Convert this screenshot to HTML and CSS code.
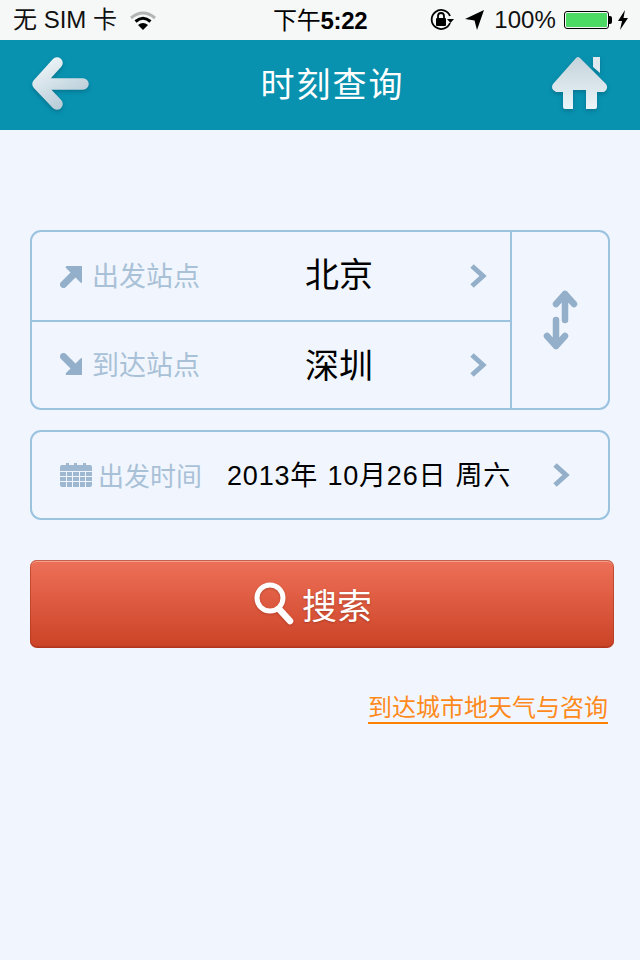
FILE: index.html
```html
<!DOCTYPE html>
<html lang="zh-CN">
<head>
<meta charset="utf-8">
<title>时刻查询</title>
<link rel="stylesheet" href="styles.css">
</head>
<body>
<svg class="defs" width="0" height="0" aria-hidden="true">
  <defs>
    <linearGradient id="icon-grad" x1="0" y1="0" x2="0" y2="1">
      <stop offset="0" stop-color="#c4d3da"/>
      <stop offset="1" stop-color="#ecf5f9"/>
    </linearGradient>
    <linearGradient id="back-grad" x1="0" y1="0" x2="0.600" y2="1">
      <stop offset="0" stop-color="#eef5f8"/>
      <stop offset="1" stop-color="#b9cdd8"/>
    </linearGradient>
  </defs>
</svg>
<header class="status">
  <div class="status-left">
    <span class="carrier">无 SIM 卡</span>
    <svg class="wifi" width="28" height="20" viewBox="0 0 28 20">
      <path d="M2 8 Q14 -2 26 8" fill="none" stroke="#b4b4b4" stroke-width="3"/>
      <path d="M6.500 11.500 Q14 5 21.500 11.500" fill="none" stroke="#000" stroke-width="3"/>
      <path d="M9 15 L14 20 L19 15 Q14 11 9 15Z" fill="#000"/>
    </svg>
  </div>
  <div class="clock"><span class="clock-cjk">下午</span>5:22</div>
  <div class="status-right">
    <svg class="lock" width="24" height="24" viewBox="0 0 24 24">
      <path d="M20 15 A9.500 9.500 0 1 1 20 8" fill="none" stroke="#000" stroke-width="1.800"/>
      <path d="M17 11 H24 L20.500 15Z" fill="#000"/>
      <rect x="6" y="10" width="10" height="8" rx="1" fill="#000"/>
      <path d="M8 10 V8 A3 3 0 0 1 14 8 V10" fill="none" stroke="#000" stroke-width="1.800"/>
    </svg>
    <svg class="loc" width="20" height="20" viewBox="0 0 20 20">
      <path d="M19 0 L0 9 L9.500 10.500 L12 20Z" fill="#000"/>
    </svg>
    <span class="battery-pct">100%</span>
    <span class="battery"><span class="battery-fill"></span></span>
    <span class="battery-tip"></span>
    <svg class="bolt" width="10" height="20" viewBox="0 0 10 20">
      <path d="M7 0 L0 11 H4 L2 20 L10 8 H5.500Z" fill="#000"/>
    </svg>
  </div>
</header>
<nav class="nav">
  <svg class="nav-icon" width="62" height="58" viewBox="0 0 62 58">
    <path d="M27 7 L8 28 L27 48 M9 28 H53" fill="none" stroke="url(#back-grad)" stroke-width="11.500" stroke-linecap="round" stroke-linejoin="round"/>
  </svg>
  <h1 class="title">时刻查询</h1>
  <svg class="nav-icon" width="60" height="58" viewBox="0 0 60 58">
    <path d="M42 1 H49 V17 L42 11Z" fill="#dfe9ee"/>
    <path d="M25 2 Q27 0 29 2 L55 28 Q58 33 53 36 H46 V51 Q46 53 44 53 H35 V34 H22 V53 H14 Q12 53 12 51 V36 H5 Q-1 33 2 28Z" fill="url(#icon-grad)"/>
  </svg>
</nav>
<main class="form">
  <section class="route box">
    <div class="route-rows">
      <div class="row row-top">
        <svg class="dir" width="24" height="24" viewBox="0 0 24 24"><path d="M3.500 20.500 L15 9" fill="none" stroke="#93afc9" stroke-width="7" stroke-linecap="round"/><path d="M7 2 H22 V18 Q22 20 20 18 L6 4 Q5 2 7 2Z" fill="#93afc9"/></svg>
        <span class="label">出发站点</span>
        <span class="station">北京</span>
        <svg class="chev" width="18" height="26" viewBox="0 0 18 26"><path d="M3 3 L14 13 L3 23" fill="none" stroke="#93afc9" stroke-width="5"/></svg>
      </div>
      <div class="row row-bottom">
        <svg class="dir" width="24" height="24" viewBox="0 0 24 24"><path d="M3.500 3.500 L15 15" fill="none" stroke="#93afc9" stroke-width="7" stroke-linecap="round"/><path d="M7 22 H22 V6 Q22 4 20 6 L6 20 Q5 22 7 22Z" fill="#93afc9"/></svg>
        <span class="label">到达站点</span>
        <span class="station">深圳</span>
        <svg class="chev" width="18" height="26" viewBox="0 0 18 26"><path d="M3 3 L14 13 L3 23" fill="none" stroke="#93afc9" stroke-width="5"/></svg>
      </div>
    </div>
    <div class="swap">
      <svg width="36" height="60" viewBox="0 0 36 60">
        <path d="M23 30 V4 M14 14 L23 4 L32 14" fill="none" stroke="#93afc9" stroke-width="6.500" stroke-linecap="round" stroke-linejoin="round"/>
        <path d="M14 30 V56 M5 46 L14 56 L23 46" fill="none" stroke="#93afc9" stroke-width="6.500" stroke-linecap="round" stroke-linejoin="round"/>
      </svg>
    </div>
  </section>
  <section class="date box">
    <svg class="cal" width="32" height="26" viewBox="0 0 32 26">
      <path d="M2 3 H6 V1 H9 V3 H14 V1 H17 V3 H23 V1 H26 V3 H30 Q32 3 32 5 V9 H0 V5 Q0 3 2 3Z M0 10 H6 V14 H0Z M7 10 H12 V14 H7Z M13 10 H19 V14 H13Z M20 10 H25 V14 H20Z M26 10 H32 V14 H26Z M0 15 H6 V19 H0Z M7 15 H12 V19 H7Z M13 15 H19 V19 H13Z M20 15 H25 V19 H20Z M26 15 H32 V19 H26Z M0 20 H6 V25 H2 Q0 25 0 23Z M7 20 H12 V25 H7Z M13 20 H19 V25 H13Z M20 20 H25 V25 H20Z M26 20 H32 V23 Q32 25 30 25 H26Z" fill="#9db8d0"/>
    </svg>
    <span class="label label-date">出发时间</span>
    <span class="date-value">2013年 10月26日 周六</span>
    <svg class="chev" width="18" height="26" viewBox="0 0 18 26"><path d="M3 3 L14 13 L3 23" fill="none" stroke="#93afc9" stroke-width="5"/></svg>
  </section>
  <button class="search" type="button">
    <svg class="search-icon" width="40" height="44" viewBox="0 0 40 44">
      <circle cx="16" cy="16" r="13" fill="none" stroke="#fff" stroke-width="5"/>
      <path d="M25 27 L36 39" fill="none" stroke="#fff" stroke-width="6.500" stroke-linecap="round"/>
    </svg>
    <span>搜索</span>
  </button>
  <p class="more"><a class="more-link" href="#">到达城市地天气与咨询</a></p>
</main>
</body>
</html>
```
FILE: styles.css
```css
* { box-sizing: border-box; }
html, body { margin: 0; padding: 0; }
body {
  width: 640px;
  height: 960px;
  overflow: hidden;
  background: #f1f6fe;
  font-family: "Liberation Sans", "Noto Sans CJK SC", sans-serif;
}
.defs { display: block; height: 0; }

.status {
  height: 40px;
  background: #f6f8f8;
  display: flex;
  align-items: center;
  padding: 0 12px 0 13px;
  position: relative;
  color: #000;
}
.status-left { display: flex; align-items: center; gap: 12px; flex: 1; }
.carrier { font-size: 24px; line-height: 40px; color: #111; }
.wifi { margin-top: -1px; }
.clock {
  position: absolute;
  left: 273px;
  top: 0;
  line-height: 42px;
  font-size: 24px;
  font-weight: 700;
  letter-spacing: -.3px;
}
.clock-cjk { font-weight: 400; }
.status-right { display: flex; align-items: center; }
.lock { margin-right: 11px; }
.loc { margin-right: 9px; }
.battery-pct { font-size: 24px; letter-spacing: .1px; margin-right: 8px; color: #111; }
.battery {
  width: 45px;
  height: 18px;
  border: 1.500px solid #000;
  border-radius: 3px;
  padding: 1px;
  display: block;
}
.battery-fill { display: block; height: 100%; background: #4cd964; border-radius: 1px; }
.battery-tip { width: 3px; height: 8px; background: #000; border-radius: 0 2px 2px 0; margin-right: 6px; }

.nav {
  height: 90px;
  background: #0892b0;
  display: flex;
  align-items: center;
  justify-content: space-between;
  padding: 0 29px 0 30px;
}
.nav-icon { filter: drop-shadow(0 2px 2px rgba(0, 60, 80, .35)); }
.title {
  margin: 0;
  font-size: 34px;
  font-weight: 400;
  letter-spacing: 2px;
  color: #fff;
  line-height: 90px;
  padding-left: 22px;
}

.form { padding: 100px 26px 0 30px; }
.box {
  width: 580px;
  border: 2px solid #9bc3e0;
  border-radius: 11px;
}
.route { height: 180px; display: flex; }
.route-rows { width: 478px; display: flex; flex-direction: column; }
.row { display: flex; align-items: center; padding: 0 23px 0 28px; }
.row-top { height: 90px; border-bottom: 2px solid #9bc3e0; }
.row-bottom { flex: 1; }
.dir { flex: none; }
.label { font-size: 27px; color: #a9c1d7; margin: 0 0 4px 8px; white-space: nowrap; }
.station { font-size: 34px; color: #000; margin: 0 0 4px 105px; flex: 1; }
.row-top .station { margin-bottom: 8px; }
.chev { flex: none; }
.swap {
  flex: 1;
  border-left: 2px solid #9bc3e0;
  display: flex;
  align-items: center;
  justify-content: center;
}
.date {
  height: 90px;
  margin-top: 20px;
  display: flex;
  align-items: center;
  padding: 0 38px 0 28px;
}
.label-date { font-size: 26px; margin: 0 0 2px 6px; }
.date-value {
  font-size: 27px;
  letter-spacing: .8px;
  word-spacing: 1px;
  color: #000;
  margin: 0 0 4px 25px;
  flex: 1;
  white-space: nowrap;
}

.search {
  display: flex;
  align-items: center;
  justify-content: center;
  gap: 8px;
  width: 584px;
  height: 88px;
  margin-top: 40px;
  padding: 0 18px 0 0;
  border: 0;
  border-bottom: 1px solid #b5341c;
  border-radius: 7px;
  background: linear-gradient(#ee7058, #cb4327);
  box-shadow: inset 0 0 0 1px rgba(170, 55, 30, .6), inset 0 2px 0 #f2a08e;
  color: #fff;
  font-family: inherit;
  font-size: 35px;
  text-shadow: 0 1px 2px rgba(120, 30, 10, .45);
}
.search-icon { filter: drop-shadow(0 1px 1px rgba(120, 30, 10, .35)); }
.more { margin: 46px 6px 0 0; text-align: right; line-height: 32px; }
.more-link {
  display: inline-block;
  font-size: 24px;
  line-height: 28px;
  color: #ff8a1c;
  text-decoration: none;
  border-bottom: 2px solid #ff7f00;
}
```
